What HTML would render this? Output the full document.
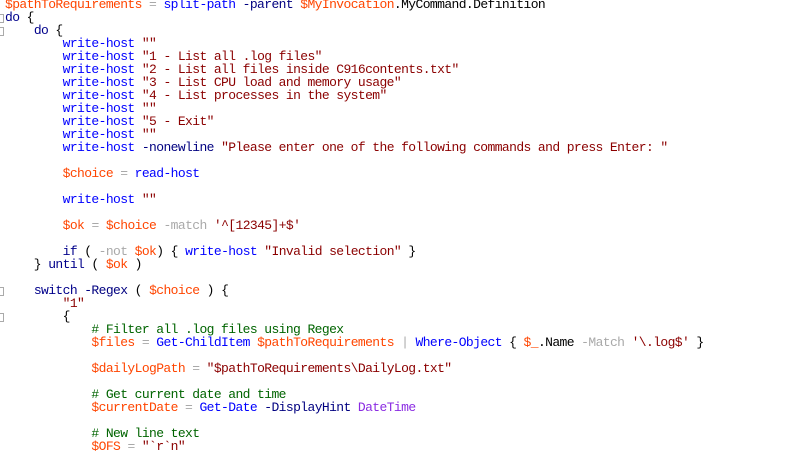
<!DOCTYPE html>
<html><head><meta charset="utf-8"><style>
html,body{margin:0;padding:0;background:#fff;width:806px;height:457px;overflow:hidden}
pre{margin:0;position:absolute;left:5px;top:-2px;font-family:"Liberation Mono",monospace;font-size:13px;letter-spacing:-0.6px;line-height:13px;color:#000}
.v{color:#ff4500}.c{color:#0000ff}.s{color:#8b0000}.g{color:#006400}.o{color:#a9a9a9}.p{color:#000080}.k{color:#00008b}.t{color:#8a2be2}
.f{position:absolute;left:0;width:3px;height:7px;border:1px solid #aaa;border-left:none}
</style></head><body>
<div class="f" style="top:14px"></div><div class="f" style="top:27px"></div>
<div class="f" style="top:287px"></div><div class="f" style="top:313px"></div>
<pre><span class="v">$pathToRequirements</span> <span class="o">=</span> <span class="c">split-path</span> <span class="p">-parent</span> <span class="v">$MyInvocation</span>.MyCommand.Definition
<span class="k">do</span> {
    <span class="k">do</span> {
        <span class="c">write-host</span> <span class="s">""</span>
        <span class="c">write-host</span> <span class="s">"1 - List all .log files"</span>
        <span class="c">write-host</span> <span class="s">"2 - List all files inside C916contents.txt"</span>
        <span class="c">write-host</span> <span class="s">"3 - List CPU load and memory usage"</span>
        <span class="c">write-host</span> <span class="s">"4 - List processes in the system"</span>
        <span class="c">write-host</span> <span class="s">""</span>
        <span class="c">write-host</span> <span class="s">"5 - Exit"</span>
        <span class="c">write-host</span> <span class="s">""</span>
        <span class="c">write-host</span> <span class="p">-nonewline</span> <span class="s">"Please enter one of the following commands and press Enter: "</span>

        <span class="v">$choice</span> <span class="o">=</span> <span class="c">read-host</span>

        <span class="c">write-host</span> <span class="s">""</span>

        <span class="v">$ok</span> <span class="o">=</span> <span class="v">$choice</span> <span class="o">-match</span> <span class="s">'^[12345]+$'</span>

        <span class="k">if</span> ( <span class="o">-not</span> <span class="v">$ok</span>) { <span class="c">write-host</span> <span class="s">"Invalid selection"</span> }
    } <span class="k">until</span> ( <span class="v">$ok</span> )

    <span class="k">switch</span> <span class="p">-Regex</span> ( <span class="v">$choice</span> ) {
        <span class="s">"1"</span>
        {
            <span class="g"># Filter all .log files using Regex</span>
            <span class="v">$files</span> <span class="o">=</span> <span class="c">Get-ChildItem</span> <span class="v">$pathToRequirements</span> <span class="o">|</span> <span class="c">Where-Object</span> { <span class="v">$_</span>.Name <span class="o">-Match</span> <span class="s">'\.log$'</span> }

            <span class="v">$dailyLogPath</span> <span class="o">=</span> <span class="s">"$pathToRequirements\DailyLog.txt"</span>

            <span class="g"># Get current date and time</span>
            <span class="v">$currentDate</span> <span class="o">=</span> <span class="c">Get-Date</span> <span class="p">-DisplayHint</span> <span class="t">DateTime</span>

            <span class="g"># New line text</span>
            <span class="v">$OFS</span> <span class="o">=</span> <span class="s">"`r`n"</span>
</pre>
</body></html>
